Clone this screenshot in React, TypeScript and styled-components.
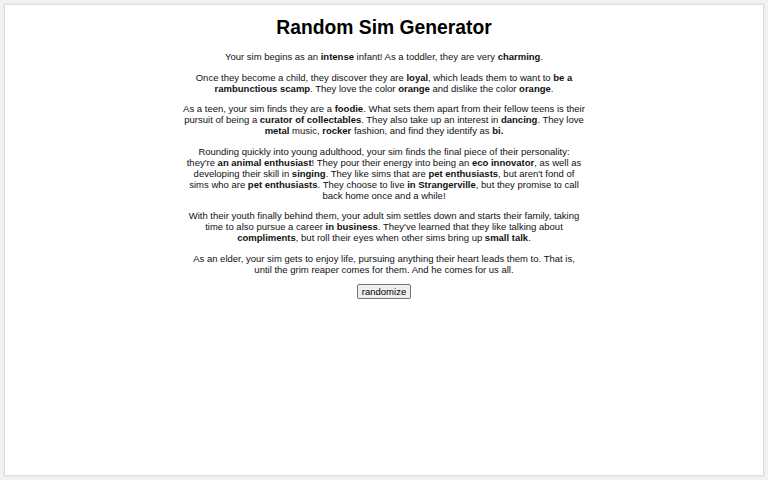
import React from 'react';
import styled, { createGlobalStyle } from 'styled-components';

const GlobalStyle = createGlobalStyle`
  html, body {
    margin: 0;
    padding: 0;
    height: 100%;
  }
  body {
    background: #f1f1f1;
    font-family: "Liberation Sans", Arial, sans-serif;
  }
  #root {
    height: 100%;
  }
`;

const App = () => {
  return (
    <>
      <GlobalStyle />
      <Page>
        <Card>
          <Title>Random Sim Generator</Title>
          <Story>
            <p>
              Your sim begins as an <b>intense</b> infant! As a toddler, they are very{' '}
              <b>charming</b>.
            </p>
            <p>
              Once they become a child, they discover they are <b>loyal</b>, which leads them
              to want to <b>be a rambunctious scamp</b>. They love the color <b>orange</b> and
              dislike the color <b>orange</b>.
            </p>
            <p>
              As a teen, your sim finds they are a <b>foodie</b>. What sets them apart from
              their fellow teens is their pursuit of being a <b>curator of collectables</b>.
              They also take up an interest in <b>dancing</b>. They love <b>metal</b> music,{' '}
              <b>rocker</b> fashion, and find they identify as <b>bi.</b>
            </p>
            <p>
              Rounding quickly into young adulthood, your sim finds the final piece of their
              personality:
              <br />
              they're <b>an animal enthusiast</b>! They pour their energy into being an{' '}
              <b>eco innovator</b>, as well as developing their skill in <b>singing</b>. They
              like sims that are <b>pet enthusiasts</b>, but aren't fond of
              <br />
              sims who are <b>pet enthusiasts</b>. They choose to live <b>in Strangerville</b>,
              but they promise to call back home once and a while!
            </p>
            <p>
              With their youth finally behind them, your adult sim settles down and starts
              their family, taking time to also pursue a career <b>in business</b>. They've
              learned that they like talking about <b>compliments</b>, but roll their eyes when
              other sims bring up <b>small talk</b>.
            </p>
            <p>
              As an elder, your sim gets to enjoy life, pursuing anything their heart leads them
              to. That is,
              <br />
              until the grim reaper comes for them. And he comes for us all.
            </p>
          </Story>
          <RandomizeButton>randomize</RandomizeButton>
        </Card>
      </Page>
    </>
  );
};

export default App;

const Page = styled.div`
  box-sizing: border-box;
  height: 100%;
  padding: 4px;
`;

const Card = styled.div`
  box-sizing: border-box;
  height: 100%;
  background: #ffffff;
  border: 1px solid #dcdcdc;
  box-shadow: 0 0 2px rgba(0, 0, 0, 0.06);
  display: flex;
  flex-direction: column;
  align-items: center;
  padding-top: 12px;
`;

const Title = styled.h1`
  margin: 0 0 12px;
  font-size: 19.3px;
  font-weight: bold;
  color: #000;
`;

const Story = styled.div`
  width: 404px;
  text-align: center;
  font-size: 9.5px;
  color: #111;

  p {
    margin: 0 0 9.5px;
  }
`;

const RandomizeButton = styled.button`
  font-family: "Liberation Sans", Arial, sans-serif;
  font-size: 9.5px;
  padding: 1px 4px;
  color: #000;
  background: #efefef;
  border: 1px solid #767676;
  border-radius: 2px;
`;
